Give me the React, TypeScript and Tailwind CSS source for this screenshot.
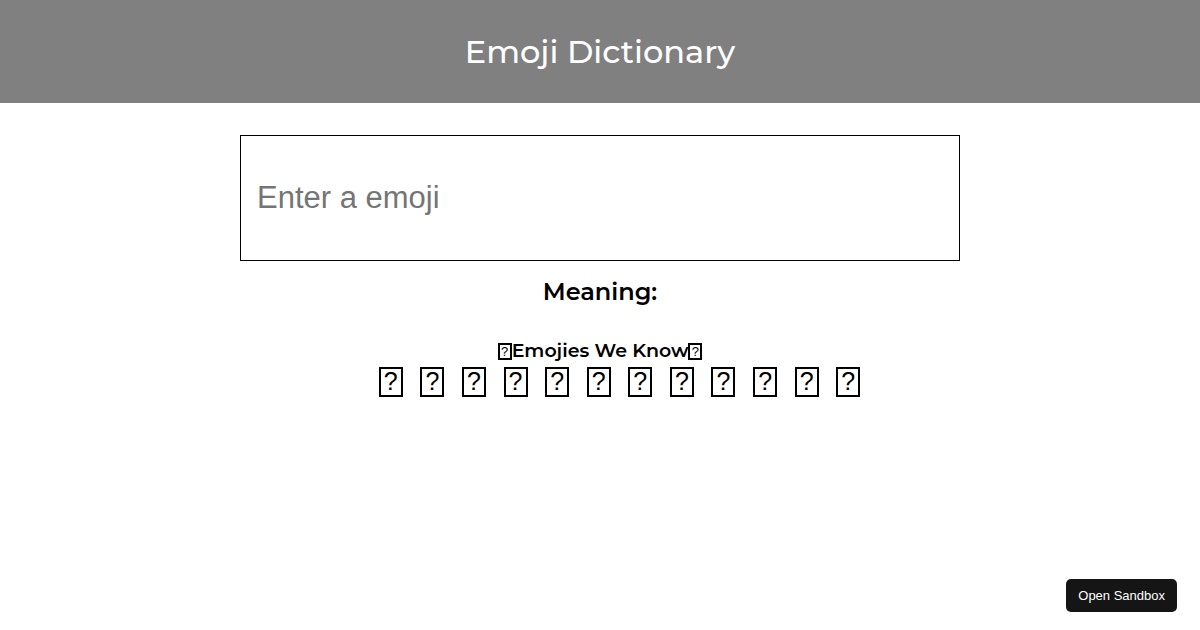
// the emoji in the reference rendered as missing-glyph boxes, so draw those
const emojis = ["😊", "😳", "😔", "🥡", "❤️", "😑", "🥰", "😂", "😍", "😘", "😎", "🙄"]

function Tofu({ big, label }: { big?: boolean; label: string }) {
  return (
    <span
      aria-label={label}
      className={
        big
          ? "inline-flex h-[30px] w-[24px] items-center justify-center border-2 border-black font-['Liberation_Sans',Arial,sans-serif] text-[25px] font-normal leading-none"
          : "inline-flex h-[17px] w-[14px] items-center justify-center border-2 border-black font-['Liberation_Sans',Arial,sans-serif] text-[13px] font-normal leading-none"
      }
    >
      ?
    </span>
  )
}

export default function App() {
  return (
    <div className="min-h-[630px] bg-white text-center font-['Montserrat','Noto_Sans',sans-serif] text-black">
      <header className="flex h-[103px] items-center justify-center bg-[#808080]">
        <h1 className="text-[32px] font-medium text-white">Emoji Dictionary</h1>
      </header>
      <main className="flex flex-col items-center pt-8">
        <input
          className="h-[126px] w-[720px] border border-black px-4 font-['Liberation_Sans',Arial,sans-serif] text-[31px] outline-none placeholder:text-[#757575]"
          placeholder="Enter a emoji"
        />
        <h2 className="mt-[13px] text-[24px] font-semibold">Meaning:</h2>
        <h3 className="mt-[27px] flex items-center text-[19px] font-semibold">
          <Tofu label="🤓" />
          Emojies We Know
          <Tofu label="🤓" />
        </h3>
        <div className="mt-[1px] flex justify-center pl-[39px]">
          {emojis.map((e, i) => (
            <span key={i} className="flex w-[41.6px] cursor-pointer justify-center">
              <Tofu big label={e} />
            </span>
          ))}
        </div>
      </main>
      <button className="fixed bottom-[18px] right-[23px] rounded-[5px] bg-[#151515] px-3 py-[7px] font-['Liberation_Sans',Arial,sans-serif] text-[13px] text-white">
        Open Sandbox
      </button>
    </div>
  )
}
